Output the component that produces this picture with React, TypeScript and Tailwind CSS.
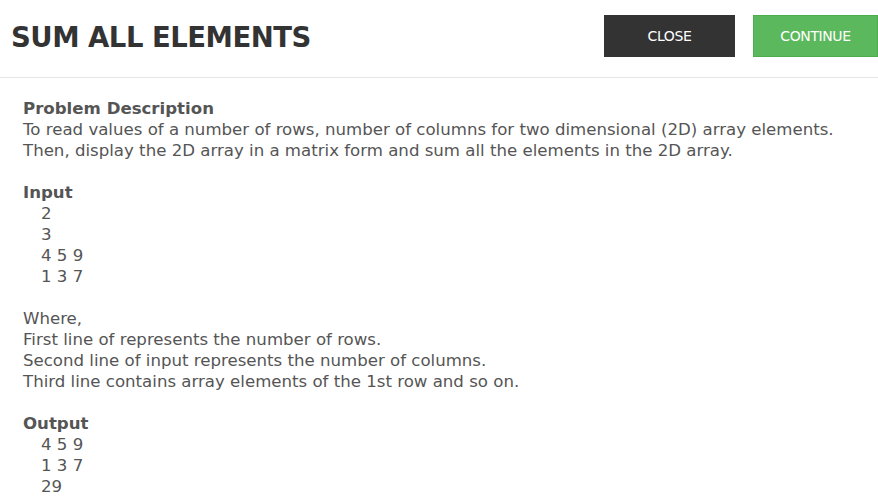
export default function App() {
  const font = { fontFamily: '"DejaVu Sans", Verdana, sans-serif' };
  return (
    <div className="min-h-screen w-[878px] bg-white text-[#555]" style={font}>
      {/* Header */}
      <div className="flex h-[78px] items-center justify-between border-b border-[#e5e5e5] pl-[11px]">
        <h1 className="-mt-[2px] text-[27.5px] font-bold tracking-[-0.5px] text-[#333]">SUM ALL ELEMENTS</h1>
        <div className="flex items-center gap-[18px] self-start pt-[15px]">
          <button className="h-[42px] w-[131px] bg-[#333] text-[14px] tracking-[-0.4px] text-white">CLOSE</button>
          <button className="h-[42px] w-[125px] border border-[#4cae4c] bg-[#5cb85c] text-[14px] tracking-[-0.4px] text-white">
            CONTINUE
          </button>
        </div>
      </div>

      {/* Body */}
      <div className="px-[23px] pt-[20px] text-[16.6px] leading-[21px]">
        <div className="font-bold">Problem Description</div>
        <div>To read values of a number of rows, number of columns for two dimensional (2D) array elements.</div>
        <div>Then, display the 2D array in a matrix form and sum all the elements in the 2D array.</div>
        <div className="h-[21px]" />
        <div className="font-bold">Input</div>
        <div className="pl-[18px]">
          <div>2</div>
          <div>3</div>
          <div>4 5 9</div>
          <div>1 3 7</div>
        </div>
        <div className="h-[21px]" />
        <div>Where,</div>
        <div>First line of represents the number of rows.</div>
        <div>Second line of input represents the number of columns.</div>
        <div>Third line contains array elements of the 1st row and so on.</div>
        <div className="h-[21px]" />
        <div className="font-bold">Output</div>
        <div className="pl-[18px]">
          <div>4 5 9</div>
          <div>1 3 7</div>
          <div>29</div>
        </div>
      </div>
    </div>
  );
}
